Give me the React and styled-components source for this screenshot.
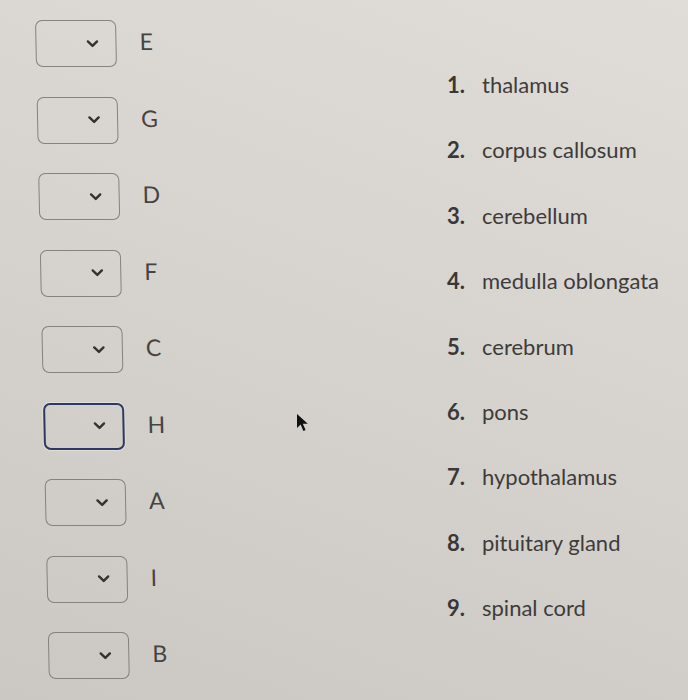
import React from "react";
import styled, { createGlobalStyle } from "styled-components";

const Global = createGlobalStyle`
  html, body {
    margin: 0;
    padding: 0;
  }
  body {
    font-family: Lato, "Open Sans", sans-serif;
  }
`

const Page = styled.div`
  position: relative;
  width: 688px;
  height: 700px;
  overflow: hidden;
  display: flex;
  padding: 20px 0 0 35px;
  box-sizing: border-box;
  background: linear-gradient(200deg, #e0dcd7 0%, #d7d3ce 45%, #cbc7c2 100%);
`

const LeftCol = styled.div`
  width: 412px;
  display: flex;
  flex-direction: column;
  gap: 29.5px;
  transform: skewX(1.2deg);
  transform-origin: 0 0;
`

const MatchRow = styled.div`
  display: flex;
  align-items: center;
  height: 47px;
  gap: 23px;
`

const Select = styled.div`
  width: 81px;
  height: 47px;
  box-sizing: border-box;
  border: ${p => (p.focused ? "2.5px solid #2e3862" : "1.6px solid #85827f")};
  border-radius: 7px;
  box-shadow: ${p => (p.focused ? "0 0 0 1px rgba(255,255,255,0.35)" : "none")};
  display: flex;
  align-items: center;
  justify-content: flex-end;
  padding-right: 17px;
`

const Letter = styled.span`
  font-size: 23px;
  color: #454443;
  line-height: 1;
  margin-top: -4px;
`

const RightCol = styled.ol`
  list-style: none;
  margin: 0;
  padding: 53px 0 0 0;
  display: flex;
  flex-direction: column;
  gap: 41.4px;
`

const Term = styled.li`
  display: flex;
  height: 24px;
  line-height: 24px;
  font-size: 22px;
  color: #3d3c3b;
`

const Num = styled.span`
  width: 35px;
  font-weight: 700;
  color: #393837;
`

const Pointer = styled.svg`
  position: absolute;
  left: 296px;
  top: 413px;
`

function Chevron() {
  return (
    <svg width="12" height="8" viewBox="0 0 12 8">
      <polyline points="1.4,1.4 6,5.9 10.6,1.4" fill="none" stroke="#343332" strokeWidth="2.4" strokeLinecap="round" strokeLinejoin="round" />
    </svg>
  )
}

const letters = ["E", "G", "D", "F", "C", "H", "A", "I", "B"];
const terms = [
  "thalamus",
  "corpus callosum",
  "cerebellum",
  "medulla oblongata",
  "cerebrum",
  "pons",
  "hypothalamus",
  "pituitary gland",
  "spinal cord",
];

function App() {
  return (
    <Page>
      <Global />
      <LeftCol>
        {letters.map((l, i) => (
          <MatchRow key={l}>
            <Select focused={i === 5}>
              <Chevron />
            </Select>
            <Letter>{l}</Letter>
          </MatchRow>
        ))}
      </LeftCol>
      <RightCol>
        {terms.map((t, i) => (
          <Term key={t}>
            <Num>{i + 1}.</Num>
            {t}
          </Term>
        ))}
      </RightCol>
      <Pointer width="14" height="20" viewBox="0 0 14 20">
        <path d="M1 1 L1 15 L4.6 11.6 L7.4 18 L9.6 17 L6.8 10.8 L11.8 10.8 Z" fill="#111" />
      </Pointer>
    </Page>
  )
}

export default App;
